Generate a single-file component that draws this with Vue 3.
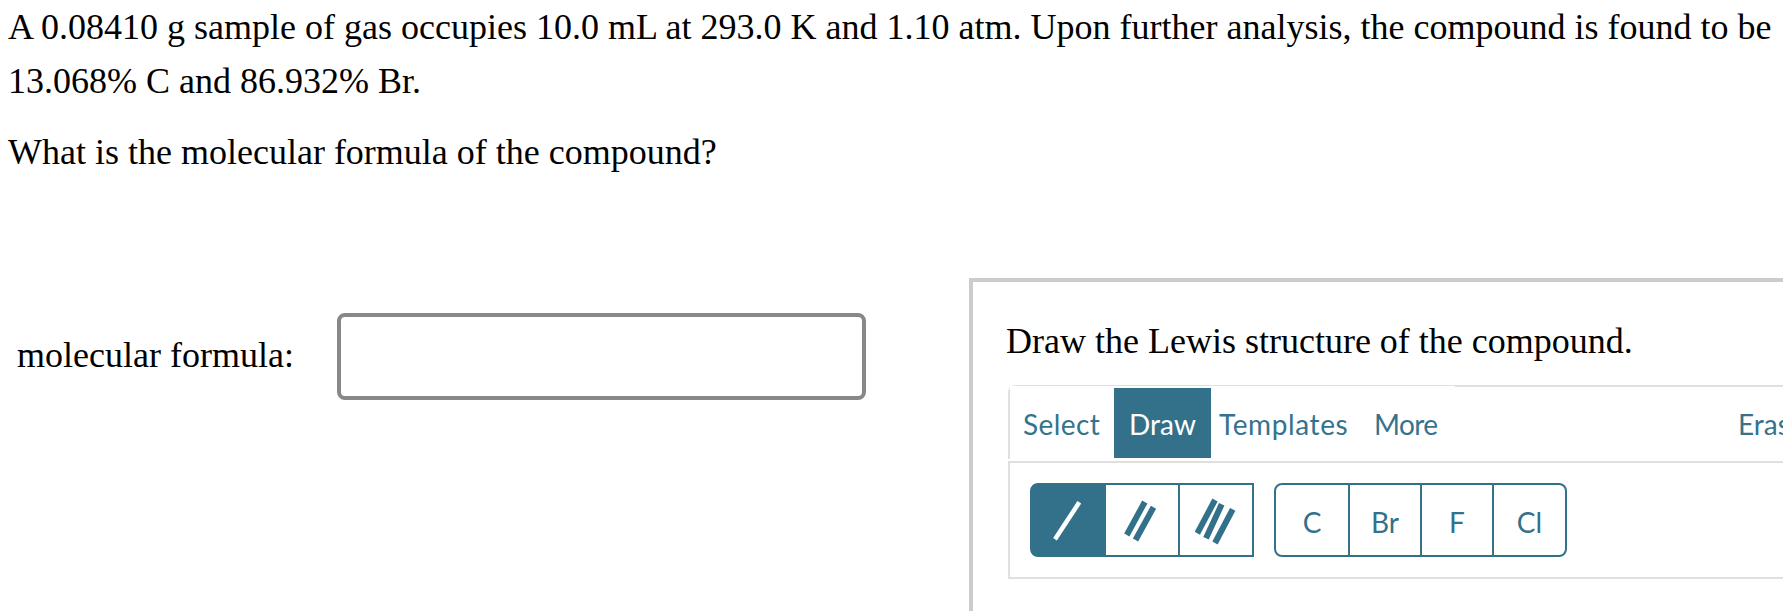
<script setup>
const tabs = ['Select', 'Draw', 'Templates', 'More']
const atoms = ['C', 'Br', 'F', 'Cl']
const bonds = [
  { id: 'single', width: 4.5, lines: [[8, 45.3, 32.3, 8.3]] },
  { id: 'double', width: 6, lines: [[5.8, 41, 23.8, 8], [14.5, 46, 32.5, 13.3]] },
  { id: 'triple', width: 6, lines: [[2.3, 39.3, 20, 6], [11, 44.3, 26.7, 10.3], [20, 49, 37.7, 15.3]] },
]
</script>

<template>
  <div class="page">
    <div class="question">
      <p class="intro">A 0.08410 g sample of gas occupies 10.0 mL at 293.0 K and 1.10 atm. Upon further analysis, the compound is found to be 13.068% C and 86.932% Br.</p>
      <p class="ask">What is the molecular formula of the compound?</p>
    </div>

    <div class="answer-row">
      <div class="formula">
        <label class="formula-label">molecular formula:</label>
        <input class="formula-input" type="text" />
      </div>

      <div class="panel">
        <p class="panel-title">Draw the Lewis structure of the compound.</p>

        <div class="sketcher">
          <div class="tabs">
            <div class="tabs-left">
              <span
                v-for="tab in tabs"
                :key="tab"
                class="tab"
                :class="[`tab-${tab.toLowerCase()}`, { active: tab === 'Draw' }]"
              >{{ tab }}</span>
            </div>
            <span class="tab tab-erase">Erase</span>
          </div>

          <div class="toolbar">
            <div class="tool-group bonds">
              <button
                v-for="(bond, i) in bonds"
                :key="bond.id"
                class="tool"
                :class="{ active: i === 0 }"
              >
                <svg width="42" height="52" viewBox="0 0 42 52">
                  <line
                    v-for="(l, j) in bond.lines"
                    :key="j"
                    :x1="l[0]"
                    :y1="l[1]"
                    :x2="l[2]"
                    :y2="l[3]"
                    :stroke-width="bond.width"
                    stroke="currentColor"
                  />
                </svg>
              </button>
            </div>
            <div class="tool-group atoms">
              <button v-for="atom in atoms" :key="atom" class="tool">{{ atom }}</button>
            </div>
          </div>
        </div>
      </div>
    </div>
  </div>
</template>

<style scoped>
.page {
  width: 1783px;
  height: 611px;
  overflow: hidden;
  background: #fff;
  color: #000;
  font-family: "Liberation Serif", "Times New Roman", serif;
  font-size: 36px;
}

.question {
  padding-left: 8px;
}

p {
  margin: 0;
}

.intro {
  line-height: 54px;
}

.ask {
  margin-top: 17px;
  line-height: 54px;
}

.answer-row {
  display: flex;
  align-items: flex-start;
  margin-top: 99px;
}

.formula {
  display: flex;
  align-items: center;
  width: 969px;
  flex: none;
  padding: 35px 0 0 17px;
  box-sizing: border-box;
}

.formula-label {
  width: 320px;
  padding-bottom: 3px;
}

.formula-input {
  width: 529px;
  height: 87px;
  box-sizing: border-box;
  border: 4px solid #888;
  border-radius: 8px;
  background: #fff;
  outline: none;
}

.panel {
  flex: none;
  width: 900px;
  height: 400px;
  box-sizing: border-box;
  border-top: 4px solid #ccc;
  border-left: 4px solid #ccc;
  padding: 36px 0 0 33px;
}

.panel-title {
  line-height: 46px;
  margin-bottom: 21px;
}

.sketcher {
  width: 860px;
  margin: 0 0 0 2px;
}

.tabs {
  display: flex;
  height: 74px;
  box-sizing: border-box;
  border-top: 2px solid #e0e0e0;
  border-left: 2px solid #e0e0e0;
  border-top-left-radius: 8px;
  font-family: Lato, sans-serif;
  font-size: 28px;
  color: #35738d;
}

.tabs-left {
  display: flex;
  width: 445px;
  height: 73px;
  margin-top: -1px;
  padding-top: 2px;
  box-sizing: border-box;
  background: #fff;
}

.tab {
  height: 70px;
  line-height: 73px;
}

.tab-select {
  margin-left: 13px;
  width: 91px;
  letter-spacing: 0.4px;
}

.tab-draw {
  width: 97px;
  text-align: center;
}

.tab-templates {
  margin-left: 8px;
  width: 155px;
  letter-spacing: 0.6px;
}

.tab-more {
  letter-spacing: -0.6px;
}

.tab.active {
  background: #33718b;
  color: #fff;
}

.tab-erase {
  margin-left: 283px;
  margin-top: 1px;
}

.toolbar {
  display: flex;
  gap: 20px;
  margin-top: 2px;
  padding: 20px 0 20px 20px;
  border-top: 2px solid #e0e0e0;
  border-left: 2px solid #e0e0e0;
  border-bottom: 2px solid #e0e0e0;
}

.tool-group {
  display: flex;
  height: 74px;
}

.tool {
  display: flex;
  align-items: center;
  justify-content: center;
  height: 74px;
  padding: 0;
  box-sizing: border-box;
  background: #fff;
  color: #33718b;
  border: 2px solid #33718b;
  border-left: none;
  font-family: Lato, sans-serif;
  font-size: 28px;
}

.atoms .tool {
  padding-top: 3px;
}

.tool:first-child {
  border-left: 2px solid #33718b;
  border-radius: 8px 0 0 8px;
}

.bonds .tool {
  width: 74px;
}

.bonds .tool:first-child {
  width: 76px;
}

.atoms .tool {
  width: 72px;
}

.atoms .tool:first-child {
  width: 76px;
}

.atoms .tool:last-child {
  width: 73px;
  border-radius: 0 8px 8px 0;
}

.tool.active {
  background: #33718b;
  color: #fff;
}
</style>
